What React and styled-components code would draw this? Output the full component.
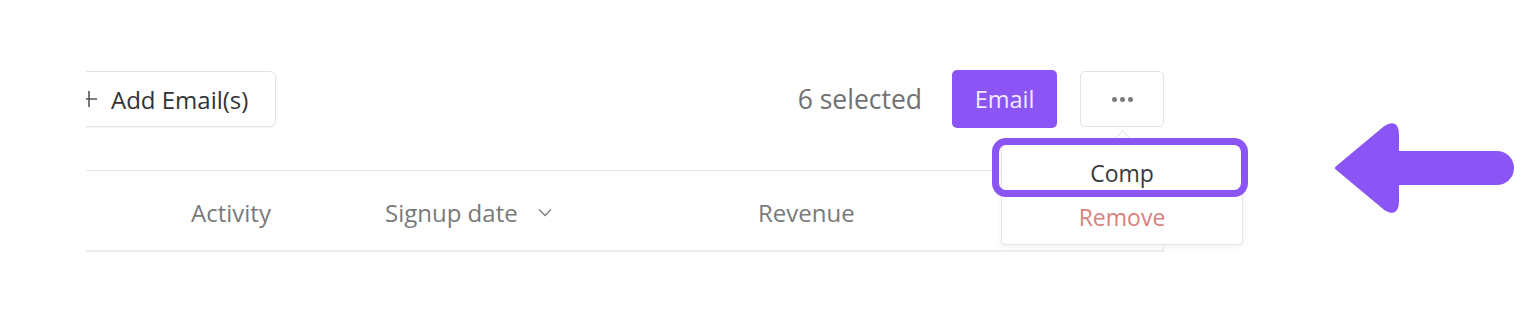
import React from 'react';
import styled, { createGlobalStyle } from 'styled-components';

const GlobalStyle = createGlobalStyle`
  html, body {
    margin: 0;
    padding: 0;
    background: #ffffff;
  }
  body {
    font-family: "Open Sans", "Noto Sans", "Liberation Sans", sans-serif;
  }
`;

const Page = styled.div`
  position: relative;
  width: 1536px;
  height: 324px;
  overflow: hidden;
  background: #ffffff;
`;

const Frame = styled.div`
  margin-left: 86px;
  width: 1078px;
  padding-top: 70px;
`;

const Toolbar = styled.div`
  display: flex;
  align-items: center;
  height: 58px;
`;

const LeftClip = styled.div`
  overflow: hidden;
  padding: 1px 1px 1px 0;
`;

const AddButton = styled.button`
  display: flex;
  align-items: center;
  gap: 13px;
  height: 56px;
  margin-left: -31px;
  padding: 0 27px 0 24px;
  border: 1px solid #e3e3e3;
  border-radius: 6px;
  background: #ffffff;
  color: #333333;
  font-family: inherit;
  font-size: 24px;
  box-shadow: 0 1px 2px rgba(0, 0, 0, 0.05);
`;

const Spacer = styled.div`
  flex: 1;
`;

const Selected = styled.span`
  color: #717171;
  font-size: 26.5px;
  margin-right: 30px;
`;

const EmailButton = styled.button`
  height: 58px;
  width: 105px;
  border: none;
  border-radius: 5px;
  background: #8b55f6;
  color: #f1eaff;
  font-family: inherit;
  font-size: 23.5px;
  margin-right: 23px;
`;

const MoreWrap = styled.div`
  position: relative;
`;

const MoreButton = styled.button`
  display: flex;
  align-items: center;
  justify-content: center;
  gap: 3px;
  width: 84px;
  height: 56px;
  border: 1px solid #e3e3e3;
  border-radius: 5px;
  background: #ffffff;
`;

const Dot = styled.span`
  width: 5px;
  height: 5px;
  border-radius: 50%;
  background: #7a7a7a;
`;

const Menu = styled.div`
  position: absolute;
  top: 68px;
  left: -79px;
  width: 242px;
  height: 106px;
  border: 1px solid #e6e6e6;
  border-radius: 4px;
  background: #ffffff;
  box-shadow: 0 2px 6px rgba(0, 0, 0, 0.06);
  display: flex;
  flex-direction: column;
  align-items: center;
  padding-top: 18px;
  box-sizing: border-box;
  z-index: 2;

  &::before {
    content: '';
    position: absolute;
    top: -7px;
    left: 114px;
    width: 12px;
    height: 12px;
    background: #ffffff;
    border-left: 1px solid #e6e6e6;
    border-top: 1px solid #e6e6e6;
    transform: rotate(45deg);
  }
`;

const MenuItem = styled.div`
  font-size: 23px;
  line-height: 30px;
  color: ${(p) => (p.$danger ? '#d98181' : '#3a3a3a')};
  margin-bottom: 14px;
`;

const Highlight = styled.div`
  position: absolute;
  top: -2px;
  left: -10px;
  width: 256px;
  height: 59px;
  border: 7px solid #8b55f6;
  border-radius: 14px;
  box-sizing: border-box;
  pointer-events: none;
`;

const HeaderRow = styled.div`
  display: grid;
  grid-template-columns: 105px 194px 373px 1fr;
  align-items: center;
  height: 76px;
  padding-top: 3px;
  margin-top: 42px;
  border-top: 1px solid #e6e6e6;
  border-bottom: 2px solid #ececec;
  border-right: 1px solid #e6e6e6;
  color: #7a7a7a;
  font-size: 24px;
`;

const HeaderCell = styled.div`
  display: flex;
  align-items: center;
  gap: 20px;
`;

const ArrowMark = styled.svg`
  position: absolute;
  left: 1333px;
  top: 123px;
`;

export default function App() {
  return (
    <Page>
      <GlobalStyle />
      <Frame>
        <Toolbar>
          <LeftClip>
            <AddButton>
              <svg width="18" height="18" viewBox="0 0 18 18">
                <path d="M9 1v16M1 9h16" stroke="#555" strokeWidth="1.6" fill="none" />
              </svg>
              Add Email(s)
            </AddButton>
          </LeftClip>
          <Spacer />
          <Selected>6 selected</Selected>
          <EmailButton>Email</EmailButton>
          <MoreWrap>
            <MoreButton>
              <Dot />
              <Dot />
              <Dot />
            </MoreButton>
            <Menu>
              <Highlight />
              <MenuItem>Comp</MenuItem>
              <MenuItem $danger>Remove</MenuItem>
            </Menu>
          </MoreWrap>
        </Toolbar>
        <HeaderRow>
          <HeaderCell />
          <HeaderCell>Activity</HeaderCell>
          <HeaderCell>
            Signup date
            <svg width="14" height="9" viewBox="0 0 14 9">
              <path d="M1 1.5l6 6 6-6" stroke="#808080" strokeWidth="1.4" fill="none" />
            </svg>
          </HeaderCell>
          <HeaderCell>Revenue</HeaderCell>
        </HeaderRow>
      </Frame>
      <ArrowMark width="182" height="92" viewBox="0 0 182 92">
        <path
          d="M4 45 L52 5 Q64 -3 64 12 L64 30 L164 30 A15 15 0 0 1 164 60 L64 60 L64 78 Q64 93 52 85 Z"
          fill="#8b55f6"
          stroke="#8b55f6"
          strokeWidth="4"
          strokeLinejoin="round"
        />
      </ArrowMark>
    </Page>
  );
}
